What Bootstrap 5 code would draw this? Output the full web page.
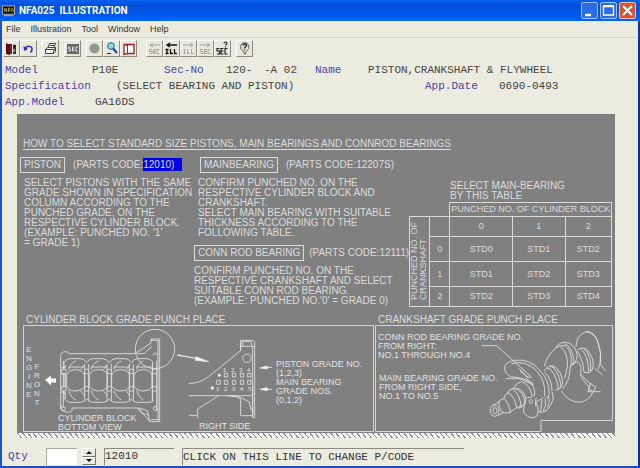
<!DOCTYPE html>
<html lang="en">
<head>
<meta charset="utf-8">
<meta name="viewport" content="width=device-width, initial-scale=1">
<title>NFA025 ILLUSTRATION</title>
<link href="https://cdn.jsdelivr.net/npm/bootstrap@5.3.0/dist/css/bootstrap.min.css" rel="stylesheet">
<style>
  body { font-family: "Liberation Sans", Arial, sans-serif; font-size: 10px; line-height: 10px; background: #ecebdf; color: #333; }
  .app-window { border: solid #1a50cc; border-width: 0 2px 2px; border-right-color: #0a35a8; }
  .title-bar { height: 21px; background: linear-gradient(#0a60ee, #0050dd 25%, #0057ea 70%, #0066fb); margin: 0 -2px; padding: 0 4px 0 2px; }
  .title-bar h1 { font: bold 10px/20px Roboto, sans-serif; color: #fff; white-space: pre; }
  .win-set { gap: 2px; }
  .win-btn { width: 17px; height: 17px; border: 1px solid #9cc0f8; border-radius: 2px; background: #2e6be6; }
  .win-close { background: #d9532c; border-color: #f0c0b4; }
  .menu-bar { height: 17px; border-bottom: 1px solid #d3d2c6; font-size: 9px; padding-left: 4px; gap: 10px; }
  .menu-bar a { color: #333; text-decoration: none; line-height: 16px; }
  .tool-bar { padding: 2px 1px; gap: 5px; }
  .tool { width: 17px; height: 17px; background: #eae8dc; border: 1px solid; border-color: #fbfbf7 #8d8b80 #8d8b80 #fbfbf7; }
  .tool svg, .win-btn svg { display: block; width: 15px; height: 15px; }
  .mono { font-family: "Liberation Mono", "Courier New", monospace; font-size: 11px; line-height: 16px; color: #444; }
  .mono .tag { color: #4b3fae; }
  .info { padding: 3px 3px 4px; white-space: nowrap; }
  .info-a { display: grid; grid-template-columns: 87fr 72fr 62fr 38fr 51fr 53fr 267fr; }
  .info-b { display: grid; grid-template-columns: 111fr 309fr 74fr 136fr; }
  .info-c { display: grid; grid-template-columns: 90fr 540fr; }
  .sheet { margin: 0 23px 0 15px; background: #808080; color: #dcdcdc; padding-top: 25px; }
  .sheet h2 { display: table; font-size: 10px; line-height: 10px; border-bottom: 1px solid #dcdcdc; margin: 0 0 7px 6px; white-space: nowrap; }
  .guide { display: grid; grid-template-columns: 174fr 215fr 203fr; padding: 0 3px; }
  .lines { white-space: pre; margin: 0; font-size: 10px; line-height: 10px; }
  .part { height: 16px; gap: 8px; white-space: nowrap; }
  .part strong { font-weight: 400; border: 1px solid #dcdcdc; padding: 1px 3px; line-height: 12px; }
  .part + .lines { padding-top: 5px; }
  .lines + .part { margin-top: 7px; gap: 5px; }
  .inset { padding-left: 6px; }
  .picked { background: #0000e6; padding: 1px 8px 1px 0; }
  .sizes-head { margin: 24px 0 1px 41px; }
  .sizes { width: 100%; table-layout: fixed; border-collapse: collapse; font-size: 9px; line-height: 9px; text-align: center; }
  .sizes th, .sizes td { border: 1px solid #dcdcdc; padding: 0; font-weight: 400; height: 25px; vertical-align: middle; white-space: nowrap; }
  .sizes .spacer { border-left: 0; border-top: 0; }
  .sizes .low th, .sizes .low td { height: 14px; }
  .sizes .mid > * { height: 20px; }
  .turned { writing-mode: vertical-rl; transform: rotate(180deg); line-height: 9px; text-align: left; }
  .figs { display: grid; grid-template-columns: 358fr 240fr; margin-top: 8px; }
  .figs figcaption { font-size: 10px; line-height: 10px; padding-left: 9px; color: #dcdcdc; white-space: nowrap; }
  .figs figcaption.near { padding-left: 3px; }
  .figs text { fill: #e2e2e2; font-size: 9px; }
  .figs .upright { writing-mode: vertical-rl; text-orientation: upright; font-size: 8px; }
  .figs .tiny { font-size: 6px; }
  .ink { fill: none; stroke: #e2e2e2; stroke-width: 2.6; stroke-linejoin: round; }
  .hatch { height: 5px; margin: 0 23px 10px 15px; background: repeating-linear-gradient(50deg, #f6f5f0 0 3px, #8e8d88 3px 4px); }
  .entry { padding-left: 6px; height: 17px; overflow: hidden; }
  .entry .tag { width: 38px; }
  .qty-box { width: 31px; height: 18px; border: 1px solid #aaa89c; border-width: 1px 0 0 1px; background: #fff; padding: 0; border-radius: 0; }
  .spin { margin: 0 8px 0 5px; }
  .step { width: 14px; height: 9px; background: #ecebdf; border: 1px solid; border-color: #fff #77756c #77756c #fff; }
  .step svg { display: block; margin: auto; }
  .well { background: transparent; border: solid #8d8b80; border-width: 1px 0 0 1px; height: 17px; line-height: 15px; text-align: left; color: #333; white-space: nowrap; }
  .well-code { width: 70px; }
  .well-note { width: 282px; }
</style>
</head>
<body>
<div class="app-window min-vh-100">
  <header class="title-bar d-flex align-items-center">
    <svg width="13" height="12" viewBox="0 0 14 12" aria-hidden="true"><rect x=".5" y=".5" width="13" height="9" fill="#111" stroke="#b7b7a5"/><path d="M3 7V3l2 4V3M7 7V3h2M7 5h2M10 7V4l1-1 1 1v3" fill="none" stroke="#d7c940" stroke-width=".8"/><path d="M2 11h10" stroke="#b7b7a5"/></svg>
    <h1 class="m-0 ps-1">NFA025  ILLUSTRATION</h1>
    <div class="win-set d-flex ms-auto">
      <button class="win-btn p-0" aria-label="Minimize"><svg viewBox="0 0 15 15"><path d="M3 12h6" stroke="#fff" stroke-width="2.4"/></svg></button>
      <button class="win-btn p-0" aria-label="Maximize"><svg viewBox="0 0 15 15"><path d="M2.500 3.500h10v8.500h-10z" fill="none" stroke="#fff" stroke-width="1.3"/><path d="M2 3h11" stroke="#fff" stroke-width="2"/></svg></button>
      <button class="win-btn win-close p-0" aria-label="Close"><svg viewBox="0 0 15 15"><path d="M3 3l9 9M12 3l-9 9" stroke="#fff" stroke-width="2.2"/></svg></button>
    </div>
  </header>
  <nav class="menu-bar d-flex">
    <a href="#">File</a><a href="#">Illustration</a><a href="#">Tool</a><a href="#">Window</a><a href="#">Help</a>
  </nav>
  <div class="tool-bar d-flex" role="toolbar" aria-label="Tools">
    <div class="d-flex">
      <button class="tool p-0" aria-label="Exit"><svg viewBox="0 0 15 15"><path d="M2 3h6v10H2z" fill="#8c1420"/><path d="M2 2l4 2v10l-4-1z" fill="#5a0d16"/><path d="M9 4h3v9H9z" fill="#333"/><circle cx="10.500" cy="5" r="1.500" fill="#222"/><path d="M9 8h2v3H9z" fill="#5c9cb0"/></svg></button>
      <button class="tool p-0" aria-label="Undo"><svg viewBox="0 0 15 15"><path d="M4 8c2-4 7-3 7 0 0 2-1 3-2 3" fill="none" stroke="#2a2ad0" stroke-width="1.500"/><path d="M2.500 5l.5 5 4-2z" fill="#2a2ad0"/></svg></button>
    </div>
    <button class="tool p-0" aria-label="Print"><svg viewBox="0 0 15 15"><path d="M2.500 8.500l2-2h8l-1 2zM2.500 8.500v4h8l2-2v-4M11 8.500l-.5 4M5 6.500l1.500-4h6l-1.500 4M7 4.500h4" fill="#f4f4f0" stroke="#444"/></svg></button>
    <button class="tool p-0" aria-label="Section"><svg viewBox="0 0 15 15"><rect x="2" y="3" width="12" height="10" fill="#666"/><path d="M5.500 6h-2v2h2v2h-2M9.500 6h-2v4h2M7.500 8h2M13 6h-2v4h2" fill="none" stroke="#eee" stroke-width=".9"/></svg></button>
    <div class="d-flex">
      <button class="tool p-0" aria-label="Stop" disabled><svg viewBox="0 0 15 15"><circle cx="7.500" cy="7.500" r="5" fill="#96958e"/></svg></button>
      <button class="tool p-0" aria-label="Zoom"><svg viewBox="0 0 15 15"><path d="M3 12.500h4" stroke="#333"/><circle cx="7" cy="5" r="3.300" fill="#8ed8e0" stroke="#1c6688"/><path d="M9 7.500l4 4.500" stroke="#1b35b5" stroke-width="2"/></svg></button>
      <button class="tool p-0" aria-label="Catalogue"><svg viewBox="0 0 15 15"><path d="M3 3.500h10v9H7l-4 1z" fill="#fff" stroke="#a02028" stroke-width="1.300"/><path d="M6.500 4v8.500M3 3.500l3.500 1" stroke="#a02028"/></svg></button>
    </div>
    <div class="d-flex ps-1">
      <button class="tool p-0" aria-label="Previous section" disabled><svg viewBox="0 0 15 15"><g fill="none" stroke="#a5a399"><path d="M3 4h10M6 2L3 4l3 2M5 8.500H2.500v2H5v2H2.500M9 8.500H6.500v4H9M6.500 10.500H9M12.500 8.500H10v4h2.500"/></g></svg></button>
      <button class="tool p-0" aria-label="Previous illustration"><svg viewBox="0 0 15 15"><g fill="none" stroke="#111" stroke-width="1.300"><path d="M3 4h10M6 2L3 4l3 2M1.500 8.500h3M3 8.500v4M1.500 12.500h3M6.500 8v4.500H9M10.500 8v4.500H13"/></g></svg></button>
      <button class="tool p-0" aria-label="Next illustration" disabled><svg viewBox="0 0 15 15"><g fill="none" stroke="#a5a399"><path d="M2 4h10M9 2l3 2-3 2M2.500 8.500h2M3.500 8.500v4M2.500 12.500h2M6.500 8v4.500H9M10.500 8v4.500H13"/></g></svg></button>
      <button class="tool p-0" aria-label="Next section" disabled><svg viewBox="0 0 15 15"><g fill="none" stroke="#a5a399"><path d="M2 4h10M9 2l3 2-3 2M5 8.500H2.500v2H5v2H2.500M9 8.500H6.500v4H9M6.500 10.500H9M12.500 8.500H10v4h2.500"/></g></svg></button>
      <button class="tool p-0" aria-label="Find section"><svg viewBox="0 0 15 15"><g fill="none" stroke="#222" stroke-width="1.200"><path d="M9 2.500c0-2 3-2 3 0 0 1-1.500 1-1.500 2M10.500 5.500v1M4.500 7.500H2v2.500h2.500v3H2M8.500 7.500H6v5.500h2.500M6 10h2.500M12.500 7.500H10v5.500h2.500"/></g></svg></button>
    </div>
    <button class="tool p-0" aria-label="Help"><svg viewBox="0 0 15 15"><path d="M7.500 1.500a4.500 4.500 0 0 1 2 8.500L8 13.500 6 10a4.500 4.500 0 0 1 1.500-8.500z" fill="#e8e6c0" stroke="#666"/><path d="M6 4.500c0-2 3.500-2 3.500 0 0 1.500-2 1-2 3M7.500 8.500v1" fill="none" stroke="#222" stroke-width="1.300"/></svg></button>
  </div>

  <section class="info mono">
    <div class="info-a"><span class="tag">Model</span><span>P10E</span><span class="tag">Sec-No</span><span>120-</span><span>-A 02</span><span class="tag">Name</span><span>PISTON,CRANKSHAFT &amp; FLYWHEEL</span></div>
    <div class="info-b"><span class="tag">Specification</span><span>(SELECT BEARING AND PISTON)</span><span class="tag">App.Date</span><span>0690-0493</span></div>
    <div class="info-c"><span class="tag">App.Model</span><span>GA16DS</span></div>
  </section>

  <main class="sheet">
    <h2 class="fw-normal">HOW TO SELECT STANDARD SIZE PISTONS, MAIN BEARINGS AND CONNROD BEARINGS</h2>
    <div class="guide">
      <section>
        <div class="part d-flex align-items-center"><strong>PISTON</strong><span>(PARTS CODE:<span class="picked">12010)</span></span></div>
        <p class="lines ps-1">SELECT PISTONS WITH THE SAME
GRADE SHOWN IN SPECIFICATION
COLUMN ACCORDING TO THE
PUNCHED GRADE, ON THE
RESPECTIVE CYLINDER BLOCK.
(EXAMPLE: PUNCHED NO. '1'
= GRADE 1)</p>
      </section>
      <section>
        <div class="part inset d-flex align-items-center"><strong>MAINBEARING</strong><span>(PARTS CODE:12207S)</span></div>
        <p class="lines ps-1">CONFIRM PUNCHED NO. ON THE
RESPECTIVE CYLINDER BLOCK AND
CRANKSHAFT.
SELECT MAIN BEARING WITH SUITABLE
THICKNESS ACCORDING TO THE
FOLLOWING TABLE.</p>
        <div class="part d-flex align-items-center"><strong>CONN ROD BEARING</strong><span>(PARTS CODE:12111)</span></div>
        <p class="lines">CONFIRM PUNCHED NO. ON THE
RESPECTIVE CRANKSHAFT AND SELECT
SUITABLE CONN ROD BEARING.
(EXAMPLE: PUNCHED NO.'0' = GRADE 0)</p>
      </section>
      <section>
        <p class="lines sizes-head">SELECT MAIN-BEARING
BY THIS TABLE</p>
        <table class="sizes">
          <colgroup><col style="width:10%"><col style="width:10%"><col style="width:31%"><col style="width:26%"><col style="width:23%"></colgroup>
          <tr class="low"><td class="spacer" colspan="2"></td><th colspan="3" scope="colgroup">PUNCHED NO. OF CYLINDER BLOCK</th></tr>
          <tr class="mid"><th rowspan="4" scope="rowgroup"><div class="turned">PUNCHED NO. OF<br>CRANKSHAFT</div></th><td></td><th scope="col">0</th><th scope="col">1</th><th scope="col">2</th></tr>
          <tr><th scope="row">0</th><td>STD0</td><td>STD1</td><td>STD2</td></tr>
          <tr><th scope="row">1</th><td>STD1</td><td>STD2</td><td>STD3</td></tr>
          <tr class="mid"><th scope="row">2</th><td>STD2</td><td>STD3</td><td>STD4</td></tr>
        </table>
      </section>
    </div>
    <div class="figs">
      <figure class="m-0">
        <figcaption>CYLINDER BLOCK GRADE PUNCH PLACE</figcaption>
        <svg class="d-block w-100" viewBox="17 326 358 108" role="img" aria-label="Cylinder block bottom view and right side">
          <path d="M23.500 326.500h350v106h-350z" fill="none" stroke="#d4d4d4"/>
          <text class="upright" x="29" y="346">ENGINE</text>
          <text class="upright" x="37" y="363">FRONT</text>
          <path d="M45 381l6-4.500v3h5v4h-5v3z" fill="#fff"/>
          <!-- block seen from below -->
          <g class="ink" transform="translate(0 310) scale(.3333)">
            <circle cx="465" cy="120" r="59"/>
            <path d="M182 300V142q0-14 14-14 8 0 12 6H405l18-12 30-20V90h26V338h-30l-6-32-26-9H216v8q-2 5-10 5-24 0-24-22"/>
            <path d="M412 134h20l24-22M474 95v240M452 332h24M453 94h24M415 298l30 34 4 6M412 300q14 18 34 18M190 155v140M470 155v150"/>
            <path d="M192 160q8-12 20-11h30q10 0 18 12 8-12 18-12h30q12 0 20 12 8-12 18-12h30q10 0 18 12 8-12 18-12h28q12 0 18 10v118q-8 4-18 3h-28q-10 0-18-10-8 10-18 10h-30q-10 0-18-10-8 10-20 10h-30q-10 0-18-10-8 10-18 10h-30q-12 0-20-12z"/>
            <path d="M184 176h12v-8M196 196v38h-12M184 196h12M184 250h12v20M205 174h48M272 174h48M340 174h48M408 174h48"/>
            <path d="M254 165v112M266 165v112M321 165v112M334 165v112M388 165v112M400 165v112M457 165v112"/>
            <path d="M200 200q4-18 26-18t28 18v34q-8 12-28 12t-26-14zM268 200q4-18 28-18t26 18v34q-8 12-26 12t-28-14zM335 200q4-18 28-18t26 18v34q-8 12-26 12t-28-14zM402 200q4-18 28-18t26 18v34q-8 12-26 12t-28-14z"/>
            <path d="M206 182q6-22 22-26M242 182l12-14M274 182q4-20 22-26M310 182l12-14M342 182q4-20 22-26M378 182l12-14M410 182q4-20 20-26M206 245q4 18 22 28M242 245l12 16M274 245q4 18 22 28M310 245l12 16M342 245q4 18 22 28M378 245l12 16M410 245q4 18 20 28"/>
            <circle cx="190" cy="299" r="6"/><circle cx="466" cy="298" r="6"/><path d="M460 140q0-8 6-8t6 8"/>
            <g fill="#808080"><path d="M186 181h12v13h-12zM254 181h12v13h-12zM322 181h12v13h-12zM388 181h12v13h-12zM458 181h12v13h-12zM186 233h12v13h-12zM254 233h12v13h-12zM322 233h12v13h-12zM388 233h12v13h-12zM458 233h12v13h-12z"/></g>
            <path d="M532 138l56 10" stroke-width="4"/><path d="M588 143l38 15-40-4z" fill="#fff"/>
          </g>
          <!-- right side view -->
          <g class="ink" transform="translate(170 310) scale(.3333)">
            <path d="M56 223q30 2 60-20L212 125V94h38l4 4V325M212 94v30M218 98h26v12M212 112h42M218 98v14M248 112v214h6M56 260h84l3 2-60 38v28M56 319h26M140 260h42q20 2 30 10v50h36M168 260l42 4 28 15 6 26M248 226v94M182 260h60l8-6"/>
            <circle cx="231" cy="148" r="13"/>
            <path d="M163 193h10v11h-10zM187 193h10v11h-10zM211 193h10v11h-10zM233 193h10v11h-10zM140 214h11v12h-11zM163 214h10v12h-10zM187 214h10v12h-10zM211 214h10v12h-10zM233 214h10v12h-10z"/>
            <circle cx="148" cy="199" r="3.500" fill="#fff"/><circle cx="127" cy="237" r="4" fill="#fff"/>
            <path d="M306 175h-16M306 241h-16" stroke-width="3"/><path d="M270 177l22-6v9zM270 241l22-5v9z" fill="#fff"/>
          </g>
          <text class="tiny" x="223" y="373">1</text><text class="tiny" x="231" y="373">2</text><text class="tiny" x="239" y="373">3</text><text class="tiny" x="247" y="373">4</text>
          <text class="tiny" x="216" y="392">1</text><text class="tiny" x="224" y="392">2</text><text class="tiny" x="232" y="392">3</text><text class="tiny" x="240" y="392">4</text><text class="tiny" x="248" y="392">5</text>
          <text x="58" y="422">CYLINDER BLOCK</text>
          <text x="58" y="431">BOTTOM VIEW</text>
          <text x="199" y="430">RIGHT SIDE</text>
          <text x="276" y="368">PISTON GRADE NO.</text>
          <text x="276" y="377">(1,2,3)</text>
          <text x="276" y="386">MAIN BEARING</text>
          <text x="276" y="395">GRADE NOS.</text>
          <text x="276" y="404">(0,1,2)</text>
        </svg>
      </figure>
      <figure class="m-0">
        <figcaption class="near">CRANKSHAFT GRADE PUNCH PLACE</figcaption>
        <svg class="d-block w-100" viewBox="375 326 240 108" role="img" aria-label="Crankshaft">
          <path d="M375.500 326.500h237v95h-71.500v11h-165.500z" fill="none" stroke="#d4d4d4"/>
          <text x="378" y="341">CONN ROD BEARING GRADE NO.</text>
          <text x="378" y="350">FROM RIGHT:</text>
          <text x="378" y="359">NO.1 THROUGH NO.4</text>
          <text x="379" y="382">MAIN BEARING GRADE NO.</text>
          <text x="379" y="391">FROM RIGHT SIDE,</text>
          <text x="379" y="400">NO.1 TO NO.5</text>
          <g class="ink" transform="translate(370 310) scale(.3333)">
            <path d="M336 110h44l104 94M408 209h40l42 18"/>
            <!-- nose and steps -->
            <ellipse cx="374" cy="305" rx="13" ry="17"/><ellipse cx="375" cy="305" rx="6" ry="9"/>
            <path d="M368 290l22-14M382 320l20-10M390 274q-6 4-2 18 6 22 20 20M390 274l12-6q14 14 20 42l-14 2M402 268q2-14 14-16M416 252q18 10 24 44l-18 12M412 254q4-14 18-16 26 2 34 36 0 20-20 24M428 240q22 16 26 54M438 236q22 6 30 32M430 238q8-16 24-20M440 296l16-6"/>
            <!-- front web -->
            <path d="M424 204q-20-8-20-28 0-16 30-22 44-6 74 28 30 32 30 70 0 14-12 16M424 164q44-12 76 22 28 30 24 76M424 204q30 0 52 14 20 12 18 40-10 10-22 8M454 218q26 8 32 42M446 178l26 26 10 2M450 186l24 20M466 206l24 18"/>
            <path d="M468 266l-8 40q8 20 30 20 18-2 14-30l-6-16 22-14M504 308q28 12 46-38l-4-22M516 272l-4 36M526 270q4 20-6 36M536 262q6 18-4 34M498 266l-2 26M482 272a5 6 0 1 0 1 0"/>
            <!-- second journal -->
            <path d="M522 186q12-18 30-14 24 14 26 50-4 18-22 22M530 176q26 4 36 66M540 170q26 8 34 66M524 190q22 20 22 56"/>
            <!-- rear web -->
            <path d="M524 172q4-30 34-56 12-8 26-6 22 14 20 50l-4 22q-2 36-22 58M558 116q10-18 30-16 28 4 34 40-2 20-16 24M570 112q26 20 22 62l-8 34M584 104q24 10 28 54M574 246q20 32 52 34 30-2 44-32l22 0"/>
            <path d="M606 164l18-6q12 10 8 38l26 26 20 12-10 16-14-4M600 170l12-4M632 196q2 14 26 38l-4 16M662 222l-6 20 12 4"/>
            <!-- flange -->
            <path d="M618 114q0-36 30-46 22-2 34 26 14 32 10 68l-8 18M650 68q26 6 34 32 12 34 6 66l18 20M674 178l24 20M622 122q24-14 38 12 16 26 6 50-10 12-24 6M630 118q26 20 26 72M640 116q26 24 22 70M622 126q18 28 20 64"/>
          </g>
        </svg>
      </figure>
    </div>
  </main>
  <div class="hatch"></div>

  <footer class="entry d-flex mono">
    <label class="tag" for="qty">Qty</label>
    <input class="qty-box mono" id="qty" type="text">
    <div class="spin d-flex flex-column">
      <button class="step p-0" aria-label="Increase"><svg width="6" height="4" viewBox="0 0 6 4"><path d="M0 4l3-3 3 3z" fill="#111"/></svg></button>
      <button class="step p-0" aria-label="Decrease"><svg width="6" height="4" viewBox="0 0 6 4"><path d="M0 0l3 3 3-3z" fill="#111"/></svg></button>
    </div>
    <div class="well well-code">12010</div>
    <button class="well well-note p-0 ms-2">CLICK ON THIS LINE TO CHANGE P/CODE</button>
  </footer>
</div>
<script src="https://cdn.jsdelivr.net/npm/bootstrap@5.3.0/dist/js/bootstrap.bundle.min.js"></script>
</body>
</html>
